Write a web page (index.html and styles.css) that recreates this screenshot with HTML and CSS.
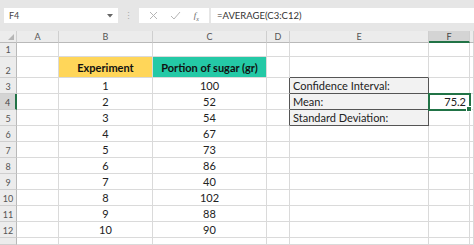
FILE: index.html
```html
<!DOCTYPE html>
<html lang="en">
<head>
  <meta charset="UTF-8" />
  <title>Sugar experiment</title>
  <link rel="stylesheet" href="styles.css">
</head>
<body>
  <div class="app">
    <div class="formula-bar">
      <div class="name-box">
        <span>F4</span>
        <svg class="caret" width="6" height="4" viewBox="0 0 6 4"><path d="M0 0h6L3 3.5z" fill="#666"/></svg>
      </div>
      <div class="grip">&#8942;</div>
      <div class="fx-buttons">
        <svg width="9" height="9" viewBox="0 0 9 9"><path d="M1 1l7 7M8 1L1 8" stroke="#b5b5b5" stroke-width="1"/></svg>
        <svg width="11" height="9" viewBox="0 0 11 9"><path d="M1 5l3 3 6-7" stroke="#b5b5b5" stroke-width="1" fill="none"/></svg>
        <span class="fx">f<sub>x</sub></span>
      </div>
      <div class="formula">=AVERAGE(C3:C12)</div>
    </div>

    <div class="sheet">
      <!-- column headers -->
      <div class="corner"></div>
      <div class="col-head">A</div>
      <div class="col-head">B</div>
      <div class="col-head">C</div>
      <div class="col-head">D</div>
      <div class="col-head">E</div>
      <div class="col-head active">F</div>
      <div class="col-head"></div>

      <!-- row 1 -->
      <div class="row-head">1</div>
      <div class="cell"></div><div class="cell"></div><div class="cell"></div>
      <div class="cell"></div><div class="cell"></div><div class="cell"></div><div class="cell"></div>

      <!-- row 2 -->
      <div class="row-head">2</div>
      <div class="cell"></div>
      <div class="cell head yellow">Experiment</div>
      <div class="cell head teal">Portion of sugar (gr)</div>
      <div class="cell"></div>
      <div class="cell dark-bottom"></div>
      <div class="cell"></div><div class="cell"></div>

      <!-- row 3 -->
      <div class="row-head">3</div>
      <div class="cell"></div>
      <div class="cell num">1</div>
      <div class="cell num">100</div>
      <div class="cell dark-right"></div>
      <div class="cell label">Confidence Interval:</div>
      <div class="cell"></div><div class="cell"></div>

      <!-- row 4 -->
      <div class="row-head active">4</div>
      <div class="cell"></div>
      <div class="cell num">2</div>
      <div class="cell num">52</div>
      <div class="cell dark-right"></div>
      <div class="cell label">Mean:</div>
      <div class="cell value selected">75.2</div>
      <div class="cell"></div>

      <!-- row 5 -->
      <div class="row-head">5</div>
      <div class="cell"></div>
      <div class="cell num">3</div>
      <div class="cell num">54</div>
      <div class="cell dark-right"></div>
      <div class="cell label">Standard Deviation:</div>
      <div class="cell"></div><div class="cell"></div>

      <!-- rows 6-12 -->
      <div class="row-head">6</div>
      <div class="cell"></div><div class="cell num">4</div><div class="cell num">67</div>
      <div class="cell"></div><div class="cell"></div><div class="cell"></div><div class="cell"></div>

      <div class="row-head">7</div>
      <div class="cell"></div><div class="cell num">5</div><div class="cell num">73</div>
      <div class="cell"></div><div class="cell"></div><div class="cell"></div><div class="cell"></div>

      <div class="row-head">8</div>
      <div class="cell"></div><div class="cell num">6</div><div class="cell num">86</div>
      <div class="cell"></div><div class="cell"></div><div class="cell"></div><div class="cell"></div>

      <div class="row-head">9</div>
      <div class="cell"></div><div class="cell num">7</div><div class="cell num">40</div>
      <div class="cell"></div><div class="cell"></div><div class="cell"></div><div class="cell"></div>

      <div class="row-head">10</div>
      <div class="cell"></div><div class="cell num">8</div><div class="cell num">102</div>
      <div class="cell"></div><div class="cell"></div><div class="cell"></div><div class="cell"></div>

      <div class="row-head">11</div>
      <div class="cell"></div><div class="cell num">9</div><div class="cell num">88</div>
      <div class="cell"></div><div class="cell"></div><div class="cell"></div><div class="cell"></div>

      <div class="row-head">12</div>
      <div class="cell"></div><div class="cell num">10</div><div class="cell num">90</div>
      <div class="cell"></div><div class="cell"></div><div class="cell"></div><div class="cell"></div>

      <div class="row-head"></div>
      <div class="cell"></div><div class="cell"></div><div class="cell"></div>
      <div class="cell"></div><div class="cell"></div><div class="cell"></div><div class="cell"></div>
    </div>
  </div>
</body>
</html>
```

FILE: styles.css
```css
body {
  margin: 0;
  background: #ffffff;
  font-family: 'Lato', 'Open Sans', sans-serif;
  color: #222;
  overflow: hidden;
}

.app {
  width: 474px;
  height: 245px;
  display: flex;
  flex-direction: column;
  background: #e6e6e6;
}

/* formula bar */
.formula-bar {
  display: flex;
  align-items: stretch;
  height: 15px;
  padding: 8px 0 8px 4px;
}

.name-box {
  width: 114px;
  background: #fff;
  display: flex;
  align-items: center;
  justify-content: space-between;
  padding: 0 5px;
  box-sizing: border-box;
  font-size: 9px;
  color: #444;
}

.grip {
  width: 21px;
  text-align: center;
  font-size: 9px;
  line-height: 15px;
  color: #aaa;
}

.fx-buttons {
  width: 70px;
  background: #fff;
  display: flex;
  align-items: center;
  justify-content: space-around;
  padding: 0 4px;
  box-sizing: border-box;
}

.fx {
  font-family: 'Liberation Serif', serif;
  font-style: italic;
  font-size: 9px;
  color: #666;
}
.fx sub {
  font-size: 6px;
}

.formula {
  flex: 1;
  margin-left: 2px;
  background: #fff;
  font-size: 9.5px;
  line-height: 15px;
  padding-left: 6px;
  color: #333;
}

/* grid */
.sheet {
  flex: 1;
  display: grid;
  grid-template-columns: 17px 42px 94px 114px 23px 139px 41px 1fr;
  grid-template-rows: 12px 14px 21px repeat(10, 16px) 1fr;
  background: #fff;
  font-size: 11px;
}

.sheet > div {
  border-right: 1px solid #dadada;
  border-bottom: 1px solid #dadada;
  box-sizing: border-box;
  min-width: 0;
  white-space: nowrap;
}

.corner,
.col-head,
.row-head {
  background: #ececec;
  color: #555;
  font-size: 9px;
}
.sheet > .col-head,
.sheet > .corner {
  border-right-color: #cfcfcf;
  border-bottom: 1px solid #b9b9b9;
  text-align: center;
  line-height: 11px;
}
.sheet > .row-head {
  border-right: 1px solid #b9b9b9;
  border-bottom-color: #cfcfcf;
  display: flex;
  align-items: flex-end;
  justify-content: center;
  padding-bottom: 1px;
}

.corner {
  position: relative;
}
.corner::after {
  content: "";
  position: absolute;
  right: 2px;
  bottom: 2px;
  border-left: 6px solid transparent;
  border-bottom: 6px solid #b5b5b5;
}

.sheet > .col-head.active {
  background: #d4d4d4;
  border-bottom: 2px solid #217346;
  color: #444;
}
.sheet > .row-head.active {
  background: #d4d4d4;
  border-right: 2px solid #217346;
  color: #444;
}

.cell {
  display: flex;
  align-items: center;
}

.num {
  justify-content: center;
}

.head {
  justify-content: center;
  font-weight: 700;
  color: #111;
}
.yellow {
  background: #ffd659;
}
.teal {
  background: #24c9a6;
}

.sheet > .label {
  background: #f2f2f2;
  border-right: 1px solid #555;
  border-bottom: 1px solid #555;
  padding-left: 3px;
}
.sheet > .dark-right {
  border-right: 1px solid #555;
}
.sheet > .dark-bottom {
  border-bottom: 1px solid #555;
}

.value {
  justify-content: flex-end;
  padding-right: 3px;
}

.selected {
  position: relative;
  outline: 2px solid #217346;
  outline-offset: -1px;
  z-index: 1;
}
.selected::after {
  content: "";
  position: absolute;
  right: -3px;
  bottom: -3px;
  width: 4px;
  height: 4px;
  background: #217346;
  border: 1px solid #fff;
}
```
